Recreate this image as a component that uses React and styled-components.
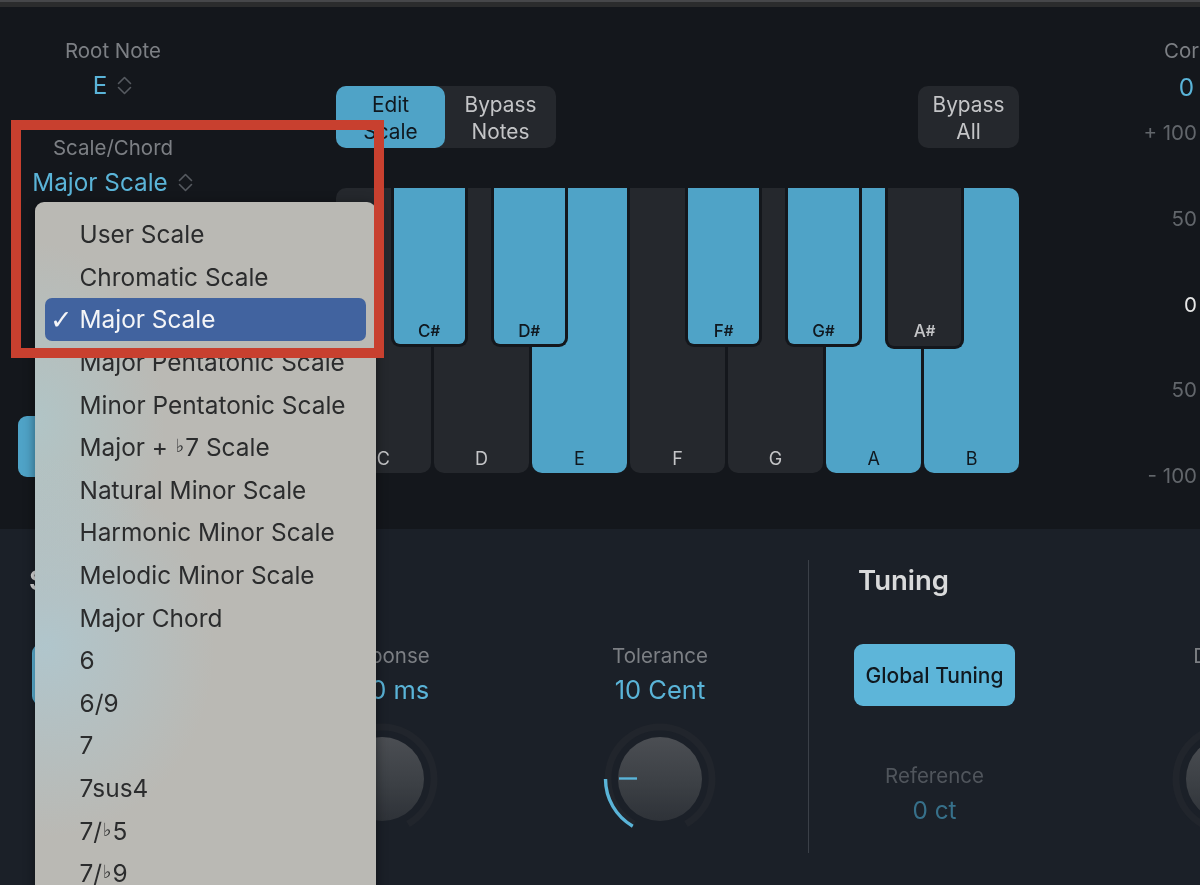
import React from "react";
import styled, { createGlobalStyle } from "styled-components";

const GlobalStyle = createGlobalStyle`
html, body {
  margin: 0;
  padding: 0;
  background: #14171c;
}
* { box-sizing: border-box; }
`;

const Page = styled.div`
position: relative;
width: 1200px;
height: 885px;
overflow: hidden;
display: flex;
flex-direction: column;
font-family: Inter, "Noto Sans", sans-serif;
filter: blur(0.55px);
`;

const TopStrip = styled.div`
height: 7px;
background: #2b2c2d;
border-top: 2px solid #46474a;
`;

const TopPanel = styled.section`
height: 522px;
display: flex;
background: #14171c;
`;

const LeftCol = styled.div`
width: 226px;
flex-shrink: 0;
padding-top: 32px;
display: flex;
flex-direction: column;
align-items: center;
`;

const Selector = styled.div`
display: flex;
flex-direction: column;
align-items: center;
gap: 6px;
margin-bottom: ${props => props.$mb || 0}px;
`;

const Label = styled.div`
font-size: 20.5px;
line-height: 24px;
white-space: nowrap;
color: ${props => props.$dim ? "#50555c" : "#7c7f84"};
`;

const Value = styled.div`
display: flex;
align-items: center;
gap: 9px;
font-size: ${props => props.$big ? 25.5 : 24.3}px;
line-height: 32px;
white-space: nowrap;
color: ${props => props.$dim ? "#37708a" : "#5ab4d8"};
`;

const ResponseValue = styled(Value)`
padding-left: 9px;
`;

const HiddenButton = styled.div`
width: 192px;
height: 61px;
margin: 218px 16px 0 0;
border-radius: 9px;
background: #4fa3c7;
align-self: flex-end;
`;

const Center = styled.div`
width: 683px;
flex-shrink: 0;
margin-left: 110px;
padding-top: 79px;
display: flex;
flex-direction: column;
gap: 40px;
`;

const Toolbar = styled.div`
display: flex;
justify-content: space-between;
`;

const ButtonGroup = styled.div`
display: flex;
height: 62px;
border-radius: 10px;
background: #25282d;
`;

const ToolButton = styled.div`
width: ${props => props.$w}px;
padding-top: 2px;
border-radius: 10px;
display: flex;
align-items: center;
justify-content: center;
text-align: center;
font-size: 20.8px;
line-height: 27px;
background: ${props => props.$on ? "#4fa3c7" : "transparent"};
color: ${props => props.$on ? "#10181f" : "#c4c5c7"};
`;

const Keyboard = styled.div`
position: relative;
height: 285px;
display: flex;
gap: 3.4px;
`;

const WhiteKey = styled.div`
flex: 1;
display: flex;
align-items: flex-end;
justify-content: center;
padding-bottom: 4px;
font-size: 18px;
line-height: 20px;
border-radius: ${props => props.$first ? "10px" : "0"} ${props => props.$last ? "10px" : "0"} 10px 10px;
background: ${props => props.$lit ? "#4fa3c7" : "#25282d"};
color: ${props => props.$lit ? "#10181f" : "#c4c5c7"};
`;

const BlackKey = styled.div`
position: absolute;
top: 0;
left: ${props => props.$left}px;
width: ${props => props.$wide ? 79 : 77}px;
height: ${props => props.$wide ? 161 : 159}px;
display: flex;
align-items: flex-end;
justify-content: center;
padding-bottom: ${props => props.$wide ? 5 : 3}px;
font-size: 17px;
font-weight: 500;
line-height: 20px;
border: 3px solid #14171c;
border-top: 0;
border-radius: 0 0 9px 9px;
background: ${props => props.$lit ? "#4fa3c7" : "#25282d"};
color: ${props => props.$lit ? "#10181f" : "#c4c5c7"};
`;

const Sharp = styled.span`
font-size: 15px;
font-weight: 600;
`;

const ScaleCol = styled.div`
width: 33px;
flex-shrink: 0;
margin-left: 145px;
padding-top: 32px;
display: flex;
flex-direction: column;
`;

const ScaleValue = styled.div`
margin-top: 8px;
padding-right: 3px;
text-align: right;
font-size: 24.3px;
line-height: 32px;
color: #5ab4d8;
`;

const Ticks = styled.div`
height: 367px;
margin-top: 18px;
display: flex;
flex-direction: column;
justify-content: space-between;
align-items: flex-end;
`;

const Tick = styled.div`
font-size: 20.5px;
line-height: 24px;
white-space: nowrap;
color: ${props => props.$zero ? "#e6e6e6" : "#62666b"};
`;

const BottomPanel = styled.section`
flex: 1;
display: flex;
padding-top: 31px;
background: #1b2028;
`;

const ScaleSection = styled.div`
width: 808px;
flex-shrink: 0;
padding-left: 29px;
display: flex;
`;

const TitleStack = styled.div`
width: 273px;
flex-shrink: 0;
display: flex;
flex-direction: column;
`;

const Title = styled.h3`
margin: 4px 0 0;
font-size: 27.5px;
line-height: 32px;
font-weight: 600;
color: #d9dadb;
`;

const SideButton = styled.div`
width: 190px;
height: 61px;
margin: 48px 0 0 3px;
border-radius: 9px;
background: #5db5d9;
`;

const KnobCol = styled.div`
width: 160px;
flex-shrink: 0;
padding-top: 84px;
margin-left: ${props => props.$ml || 0}px;
display: flex;
flex-direction: column;
align-items: center;
gap: 6px;
`;

const KnobSvg = styled.svg`
display: block;
flex-shrink: 0;
margin-top: 9px;
`;

const Divider = styled.div`
width: 1px;
height: 293px;
flex-shrink: 0;
background: #3b4048;
`;

const TuningSection = styled.div`
width: 161px;
flex-shrink: 0;
margin-left: 45px;
display: flex;
flex-direction: column;
align-items: center;
gap: 6px;
`;

const TuningTitle = styled(Title)`
align-self: flex-start;
margin-left: 4px;
`;

const GlobalButton = styled.div`
width: 161px;
height: 62px;
margin: 42px 0 52px;
border-radius: 9px;
display: flex;
align-items: center;
justify-content: center;
font-size: 21px;
font-weight: 500;
white-space: nowrap;
background: #5db5d9;
color: #10181f;
`;

const Menu = styled.div`
position: absolute;
left: 35px;
top: 202px;
width: 341px;
height: 700px;
padding-top: 11px;
border-radius: 9px 9px 0 0;
box-shadow: 0 2px 12px rgba(0, 0, 0, 0.45);
background:
  radial-gradient(ellipse 170px 190px at 10px 445px, rgba(172, 203, 214, 0.7), transparent),
  radial-gradient(ellipse 130px 180px at 0 220px, rgba(172, 203, 208, 0.65), transparent),
  #bab9b4;
`;

const MenuItem = styled.div`
height: 42.6px;
margin: 0 10px;
display: flex;
align-items: center;
font-size: 24.4px;
white-space: nowrap;
border-radius: 7px;
background: ${props => props.$active ? "#41639f" : "transparent"};
color: ${props => props.$active ? "#f4f5f7" : "#2b2c2d"};
`;

const CheckSlot = styled.span`
width: 34.5px;
flex-shrink: 0;
padding-left: 5px;
font-family: "DejaVu Sans", sans-serif;
font-size: 27px;
line-height: 1;
`;

const Flat = styled.span`
font-family: "DejaVu Sans", sans-serif;
font-size: 18px;
margin: 0 1px;
position: relative;
top: -4px;
`;

const RedBox = styled.div`
position: absolute;
left: 11px;
top: 120px;
width: 373px;
height: 238px;
border: 10px solid #c8402f;
pointer-events: none;
`;

function UpDown() {
  return (
    <svg width="17" height="19" viewBox="0 0 17 19" fill="none" stroke="#565a60" strokeWidth="1.6" strokeLinejoin="round" strokeLinecap="round">
      <path d="M2.5 7.5 L8.5 1.5 L14.5 7.5" />
      <path d="M2.5 11.5 L8.5 17.5 L14.5 11.5" />
    </svg>
  );
}

// angulos medidos desde las 12 en sentido horario
function arcPoint(r, deg) {
  const rad = (deg * Math.PI) / 180;
  return [58 + r * Math.sin(rad), 58 - r * Math.cos(rad)];
}

function arc(r, from, to) {
  const [x1, y1] = arcPoint(r, from);
  const [x2, y2] = arcPoint(r, to);
  const large = to - from > 180 ? 1 : 0;
  return `M${x1} ${y1} A${r} ${r} 0 ${large} 1 ${x2} ${y2}`;
}

function Knob({ level }) {
  return (
    <KnobSvg width="116" height="116" viewBox="0 0 116 116" fill="none">
      <defs>
        <linearGradient id="knobFill" x1="0" y1="0" x2="0" y2="1">
          <stop offset="0" stopColor="#4b4e53" />
          <stop offset="0.55" stopColor="#3c4045" />
          <stop offset="1" stopColor="#2e3238" />
        </linearGradient>
      </defs>
      <path d={arc(52, 210, 510)} stroke="#21252c" strokeWidth="7" />
      {level && <path d={arc(54.5, 210, 270)} stroke="#5ab4d8" strokeWidth="3.4" />}
      <circle cx="58" cy="58" r="42" fill="url(#knobFill)" />
      {level && <path d="M17 57.5 H35" stroke="#5ab4d8" strokeWidth="2.4" />}
    </KnobSvg>
  );
}

const menuItems = [
  "User Scale",
  "Chromatic Scale",
  "Major Scale",
  "Major Pentatonic Scale",
  "Minor Pentatonic Scale",
  <>Major + <Flat>♭</Flat>7 Scale</>,
  "Natural Minor Scale",
  "Harmonic Minor Scale",
  "Melodic Minor Scale",
  "Major Chord",
  "6",
  "6/9",
  "7",
  "7sus4",
  <>7/<Flat>♭</Flat>5</>,
  <>7/<Flat>♭</Flat>9</>,
];

const whiteKeys = [
  { name: "C" },
  { name: "D" },
  { name: "E", lit: true },
  { name: "F" },
  { name: "G" },
  { name: "A", lit: true },
  { name: "B", lit: true },
];

const blackKeys = [
  { name: "C", left: 54.5, lit: true },
  { name: "D", left: 154.7, lit: true },
  { name: "F", left: 349, lit: true },
  { name: "G", left: 449, lit: true },
  { name: "A", left: 549, wide: true },
];

function App() {
  return (
    <Page>
      <GlobalStyle />
      <TopStrip />
      <TopPanel>
        <LeftCol>
          <Selector $mb={35}>
            <Label>Root Note</Label>
            <Value>E <UpDown /></Value>
          </Selector>
          <Selector>
            <Label>Scale/Chord</Label>
            <Value>Major Scale <UpDown /></Value>
          </Selector>
          <HiddenButton />
        </LeftCol>
        <Center>
          <Toolbar>
            <ButtonGroup>
              <ToolButton $w={109} $on>Edit<br />Scale</ToolButton>
              <ToolButton $w={111}>Bypass<br />Notes</ToolButton>
            </ButtonGroup>
            <ButtonGroup>
              <ToolButton $w={101}>Bypass<br />All</ToolButton>
            </ButtonGroup>
          </Toolbar>
          <Keyboard>
            {whiteKeys.map((k, i) => (
              <WhiteKey key={k.name} $lit={k.lit} $first={i === 0} $last={i === 6}>{k.name}</WhiteKey>
            ))}
            {blackKeys.map(k => (
              <BlackKey key={k.name} $left={k.left} $lit={k.lit} $wide={k.wide}>{k.name}<Sharp>#</Sharp></BlackKey>
            ))}
          </Keyboard>
        </Center>
        <ScaleCol>
          <Label>Correction</Label>
          <ScaleValue>0</ScaleValue>
          <Ticks>
            <Tick>+ 100</Tick>
            <Tick>50</Tick>
            <Tick $zero>0</Tick>
            <Tick>50</Tick>
            <Tick>- 100</Tick>
          </Ticks>
        </ScaleCol>
      </TopPanel>
      <BottomPanel>
        <ScaleSection>
          <TitleStack>
            <Title>S</Title>
            <SideButton />
          </TitleStack>
          <KnobCol>
            <Label>Response</Label>
            <ResponseValue $big>100 ms</ResponseValue>
            <Knob />
          </KnobCol>
          <KnobCol $ml={118}>
            <Label>Tolerance</Label>
            <Value $big>10 Cent</Value>
            <Knob level />
          </KnobCol>
        </ScaleSection>
        <Divider />
        <TuningSection>
          <TuningTitle>Tuning</TuningTitle>
          <GlobalButton>Global Tuning</GlobalButton>
          <Label $dim>Reference</Label>
          <Value $dim>0 ct</Value>
        </TuningSection>
        <KnobCol $ml={133}>
          <Label>Detune</Label>
          <Value>0 ct</Value>
          <Knob />
        </KnobCol>
      </BottomPanel>
      <Menu>
        {menuItems.map((item, i) => (
          <MenuItem key={i} $active={i === 2}>
            <CheckSlot>{i === 2 ? "✓" : ""}</CheckSlot>
            <span>{item}</span>
          </MenuItem>
        ))}
      </Menu>
      <RedBox />
    </Page>
  );
}

export default App;
